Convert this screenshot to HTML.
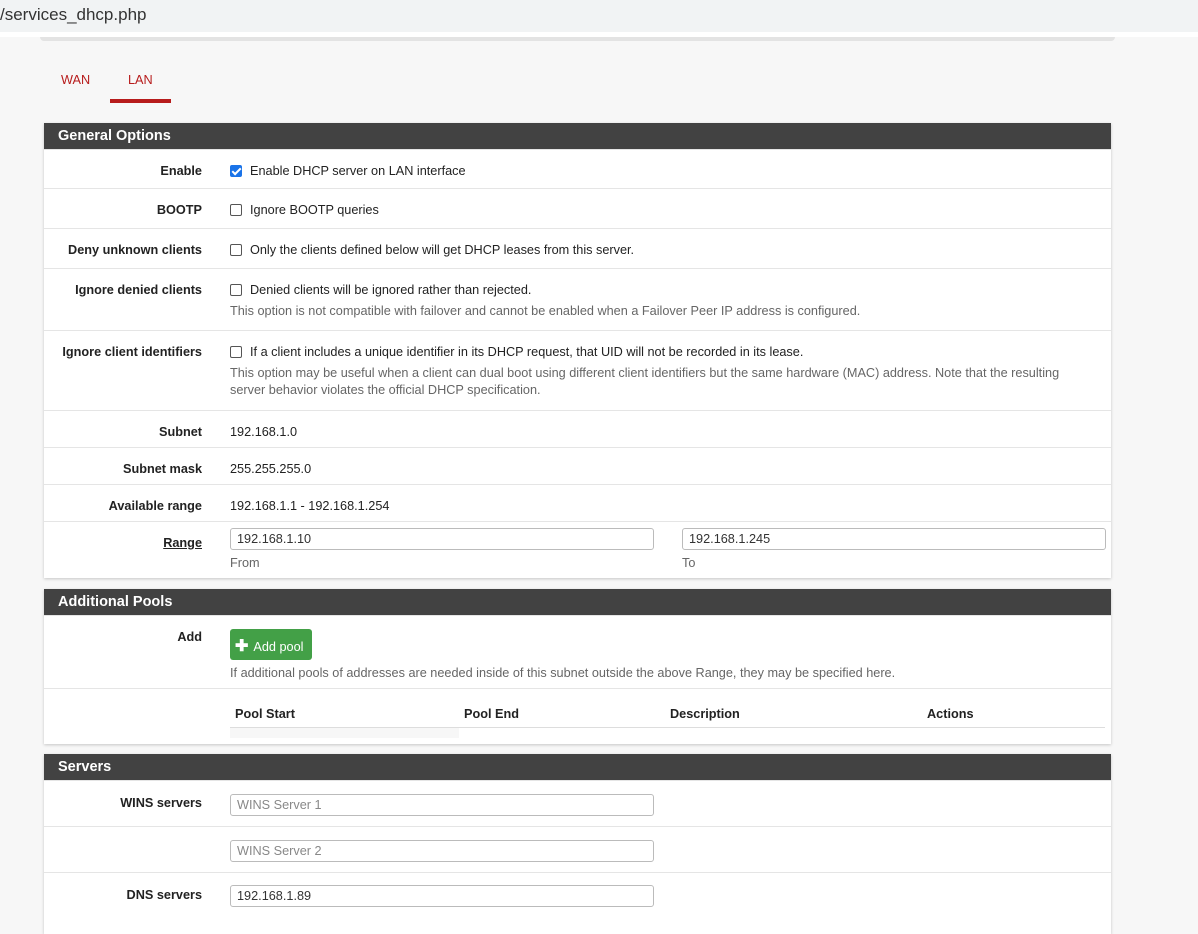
<!DOCTYPE html>
<html><head><style>
*{box-sizing:border-box}
body{margin:0;width:1198px;height:918px;overflow:hidden;background:#f7f7f7;font-family:"Liberation Sans",Arial,sans-serif;font-size:12.7px;color:#222}
.addr{position:absolute;left:0;top:0;width:1198px;height:32px;background:#f1f3f4;font-size:17px;color:#333;padding:5px 0 0 0}
.line{position:absolute;top:32px;left:0;width:1198px;height:5px;background:#fff}
.shadow{position:absolute;top:37px;left:40px;width:1075px;height:4px;background:#e3e3e3;border-radius:0 0 8px 8px}
.tab{position:absolute;top:73px;color:#b71c1c;font-size:12.7px}
.tabline{position:absolute;left:110px;top:99px;width:61px;height:4px;background:#b71c1c}
.panel{position:absolute;left:44px;width:1067px;background:#fff;box-shadow:0 1px 3px rgba(0,0,0,.2)}
.hd{height:26px;background:#424242;color:#fff;font-weight:bold;font-size:14.5px;padding:5px 14px}
.row{position:relative;border-top:1px solid #e5e5e5}
.row:first-of-type{border-top:none}
.lbl{position:absolute;left:0;width:158px;text-align:right;font-weight:bold}
.c{position:absolute;left:186px;right:6px}
.cb{display:inline-block;width:12px;height:12px;border:1px solid #555;border-radius:2px;vertical-align:-2px;margin-right:8px}
.cb.on{background:#1a73e8;border-color:#1a73e8;position:relative}
.cb.on:after{content:"";position:absolute;left:3px;top:0px;width:3px;height:7px;border:solid #fff;border-width:0 2px 2px 0;transform:rotate(45deg)}
.help{color:#666;margin-top:8px;line-height:17px}
.in{position:absolute;height:22px;border:1px solid #bbb;border-radius:3px;padding:3px 6px;font-size:12.7px;color:#333}
.ph{color:#888}
</style></head><body>
<div class="addr">/services_dhcp.php</div>
<div class="line"></div>
<div class="shadow"></div>
<div class="tab" style="left:61px">WAN</div>
<div class="tab" style="left:128px">LAN</div>
<div class="tabline"></div>

<div class="panel" style="top:123px;height:455px">
<div class="hd">General Options</div>
<div class="row" style="height:39px"><div class="lbl" style="top:14px">Enable</div><div class="c" style="top:14px"><span class="cb on"></span>Enable DHCP server on LAN interface</div></div>
<div class="row" style="height:40px"><div class="lbl" style="top:14px">BOOTP</div><div class="c" style="top:14px"><span class="cb"></span>Ignore BOOTP queries</div></div>
<div class="row" style="height:40px"><div class="lbl" style="top:14px">Deny unknown clients</div><div class="c" style="top:14px"><span class="cb"></span>Only the clients defined below will get DHCP leases from this server.</div></div>
<div class="row" style="height:62px"><div class="lbl" style="top:14px">Ignore denied clients</div><div class="c" style="top:14px"><span class="cb"></span>Denied clients will be ignored rather than rejected.<div class="help" style="margin-top:6px">This option is not compatible with failover and cannot be enabled when a Failover Peer IP address is configured.</div></div></div>
<div class="row" style="height:80px"><div class="lbl" style="top:14px">Ignore client identifiers</div><div class="c" style="top:14px;right:16px"><span class="cb"></span>If a client includes a unique identifier in its DHCP request, that UID will not be recorded in its lease.<div class="help" style="margin-top:6px">This option may be useful when a client can dual boot using different client identifiers but the same hardware (MAC) address. Note that the resulting server behavior violates the official DHCP specification.</div></div></div>
<div class="row" style="height:37px"><div class="lbl" style="top:14px">Subnet</div><div class="c" style="top:14px">192.168.1.0</div></div>
<div class="row" style="height:37px"><div class="lbl" style="top:14px">Subnet mask</div><div class="c" style="top:14px">255.255.255.0</div></div>
<div class="row" style="height:37px"><div class="lbl" style="top:14px">Available range</div><div class="c" style="top:14px">192.168.1.1 - 192.168.1.254</div></div>
<div class="row" style="height:56px"><div class="lbl" style="top:14px;text-decoration:underline">Range</div>
<div class="in" style="left:186px;top:6px;width:424px">192.168.1.10</div>
<div class="in" style="left:638px;top:6px;width:424px">192.168.1.245</div>
<div style="position:absolute;left:186px;top:34px;color:#666">From</div>
<div style="position:absolute;left:638px;top:34px;color:#666">To</div></div>
</div>

<div class="panel" style="top:589px;height:155px">
<div class="hd">Additional Pools</div>
<div class="row" style="height:73px"><div class="lbl" style="top:14px">Add</div>
<div style="position:absolute;left:186px;top:13px;width:82px;height:31px;background:#43a047;border-radius:3px;color:#fff;font-size:12.7px;padding:7px 0 0 5px;white-space:nowrap"><span style="font-weight:bold;font-size:16px;margin-right:5px">✚</span>Add pool</div>
<div style="position:absolute;left:186px;top:50px;color:#666">If additional pools of addresses are needed inside of this subnet outside the above Range, they may be specified here.</div></div>
<div class="row" style="height:55px">
<div style="position:absolute;left:186px;right:6px;top:38px;border-top:1px solid #ddd"></div>
<div style="position:absolute;left:186px;width:229px;top:39px;height:10px;background:#f7f7f7"></div>
<div style="position:absolute;top:18px;left:191px;font-weight:bold">Pool Start</div>
<div style="position:absolute;top:18px;left:420px;font-weight:bold">Pool End</div>
<div style="position:absolute;top:18px;left:626px;font-weight:bold">Description</div>
<div style="position:absolute;top:18px;left:883px;font-weight:bold">Actions</div></div>
</div>

<div class="panel" style="top:754px;height:180px">
<div class="hd">Servers</div>
<div class="row" style="height:46px"><div class="lbl" style="top:15px">WINS servers</div><div class="in ph" style="left:186px;top:13px;width:424px">WINS Server 1</div></div>
<div class="row" style="height:46px"><div class="in ph" style="left:186px;top:13px;width:424px">WINS Server 2</div></div>
<div class="row" style="height:46px"><div class="lbl" style="top:15px">DNS servers</div><div class="in" style="left:186px;top:12px;width:424px">192.168.1.89</div></div>
</div>
</body></html>
